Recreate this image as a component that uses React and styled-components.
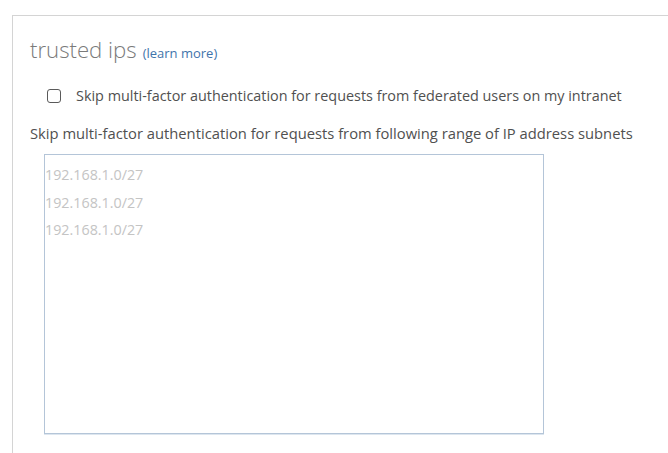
import React from "react";
import styled, { createGlobalStyle } from "styled-components";

const Global = createGlobalStyle`
  html, body { margin: 0; padding: 0; background: #fff; overflow: hidden; }
  body { font-family: "Segoe UI", "Open Sans", sans-serif; }
`;

const Page = styled.div`
  width: 668px;
  height: 453px;
  padding: 15px 0 0 12px;
  box-sizing: border-box;
  overflow: hidden;
`;

const Panel = styled.section`
  width: 720px;
  height: 460px;
  border-top: 1px solid #d4d4d4;
  border-left: 1px solid #d4d4d4;
  padding: 20px 0 0 17px;
  box-sizing: border-box;
  display: flex;
  flex-direction: column;
`;

const Heading = styled.h2`
  margin: 0;
  font-weight: 300;
  font-size: 22.2px;
  line-height: 28px;
  color: #7a7a7a;
  display: flex;
  align-items: baseline;
  gap: 6px;
`;

const LearnMore = styled.a`
  font-size: 13px;
  font-weight: 400;
  color: #3f74ab;
  text-decoration: none;
`;

const CheckRow = styled.label`
  display: flex;
  align-items: center;
  gap: 15px;
  margin: 20px 0 0 17px;
  font-size: 14.4px;
  line-height: 18px;
  color: #505050;
`;

const Box = styled.span`
  width: 12px;
  height: 12px;
  border: 1px solid #5a5a5a;
  border-radius: 3px;
  flex: none;
`;

const Description = styled.p`
  margin: 19px 0 0 0;
  font-size: 14.75px;
  line-height: 18px;
  color: #505050;
  white-space: nowrap;
`;

const Subnets = styled.textarea`
  margin: 12px 0 0 14px;
  width: 500px;
  height: 280px;
  box-sizing: border-box;
  border: 1px solid #b4c5d8;
  box-shadow: 0 1px 0 #dde6ef;
  padding: 6px 0 0 0;
  font-family: "Segoe UI", "Open Sans", sans-serif;
  font-size: 14.3px;
  line-height: 27.5px;
  resize: none;
  outline: none;
  &::placeholder { color: #c4c4c4; }
`;

export default function App() {
  return (
    <>
      <Global />
      <Page>
        <Panel>
          <Heading>
            trusted ips <LearnMore href="#">(learn more)</LearnMore>
          </Heading>
          <CheckRow>
            <Box />
            Skip multi-factor authentication for requests from federated users on my intranet
          </CheckRow>
          <Description>
            Skip multi-factor authentication for requests from following range of IP address subnets
          </Description>
          <Subnets placeholder={"192.168.1.0/27\n192.168.1.0/27\n192.168.1.0/27"} />
        </Panel>
      </Page>
    </>
  );
}
